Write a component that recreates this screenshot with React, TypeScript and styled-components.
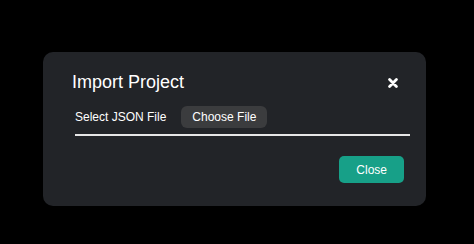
import React from "react";
import styled, { createGlobalStyle } from "styled-components";

const Global = createGlobalStyle`
  html, body {
    margin: 0;
    padding: 0;
    background: #000;
  }
  body {
    font-family: "Liberation Sans", Arial, Helvetica, sans-serif;
    -webkit-font-smoothing: antialiased;
  }
`;

const Backdrop = styled.div`
  width: 474px;
  height: 244px;
  background: #000;
  padding: 52px 0 0 43px;
  box-sizing: border-box;
`;

const Modal = styled.div`
  width: 383px;
  box-sizing: border-box;
  background: #222428;
  border-radius: 10px;
  padding: 20px 0 23px 0;
  color: #fff;
  display: flex;
  flex-direction: column;
`;

const Header = styled.div`
  display: flex;
  align-items: center;
  justify-content: space-between;
  padding: 0 28px 0 29px;
`;

const Title = styled.h2`
  margin: 0;
  font-size: 18px;
  line-height: 21px;
  font-weight: 400;
  color: #fff;
`;

const CloseIcon = styled.button`
  border: 0;
  background: none;
  padding: 0;
  margin: 0;
  width: 10px;
  height: 10px;
  display: flex;
  align-items: center;
  justify-content: center;
  cursor: pointer;
`;

const Body = styled.div`
  margin: 13px 16px 0 32px;
  display: flex;
  flex-direction: column;
`;

const FieldRow = styled.div`
  display: flex;
  align-items: center;
  gap: 15px;
  height: 22px;
`;

const Label = styled.label`
  font-size: 12px;
  line-height: 14px;
  color: #fff;
`;

const FileButton = styled.button`
  height: 22px;
  padding: 0 11px;
  border: 0;
  border-radius: 6px;
  background: #3b3c3e;
  color: #fff;
  font-family: inherit;
  font-size: 12px;
  line-height: 14px;
  cursor: pointer;
`;

const Underline = styled.div`
  height: 2px;
  margin-top: 6px;
  background: #e6e6e6;
`;

const Footer = styled.div`
  display: flex;
  justify-content: flex-end;
  padding: 0 22px 0 0;
  margin-top: 20px;
`;

const PrimaryButton = styled.button`
  height: 27px;
  padding: 0 17px;
  border: 0;
  border-radius: 5px;
  background: #17a088;
  color: #fff;
  font-family: inherit;
  font-size: 12px;
  line-height: 14px;
  cursor: pointer;
`;

export default function App() {
  return (
    <>
      <Global />
      <Backdrop>
        <Modal>
          <Header>
            <Title>Import Project</Title>
            <CloseIcon aria-label="close">
              <svg width="10" height="10" viewBox="0 0 10 10">
                <path
                  d="M1.6 1.6 L8.4 8.4 M8.4 1.6 L1.6 8.4"
                  stroke="#fff"
                  strokeWidth="2.8"
                  strokeLinecap="round"
                />
              </svg>
            </CloseIcon>
          </Header>
          <Body>
            <FieldRow>
              <Label>Select JSON File</Label>
              <FileButton>Choose File</FileButton>
            </FieldRow>
            <Underline />
          </Body>
          <Footer>
            <PrimaryButton>Close</PrimaryButton>
          </Footer>
        </Modal>
      </Backdrop>
    </>
  );
}
